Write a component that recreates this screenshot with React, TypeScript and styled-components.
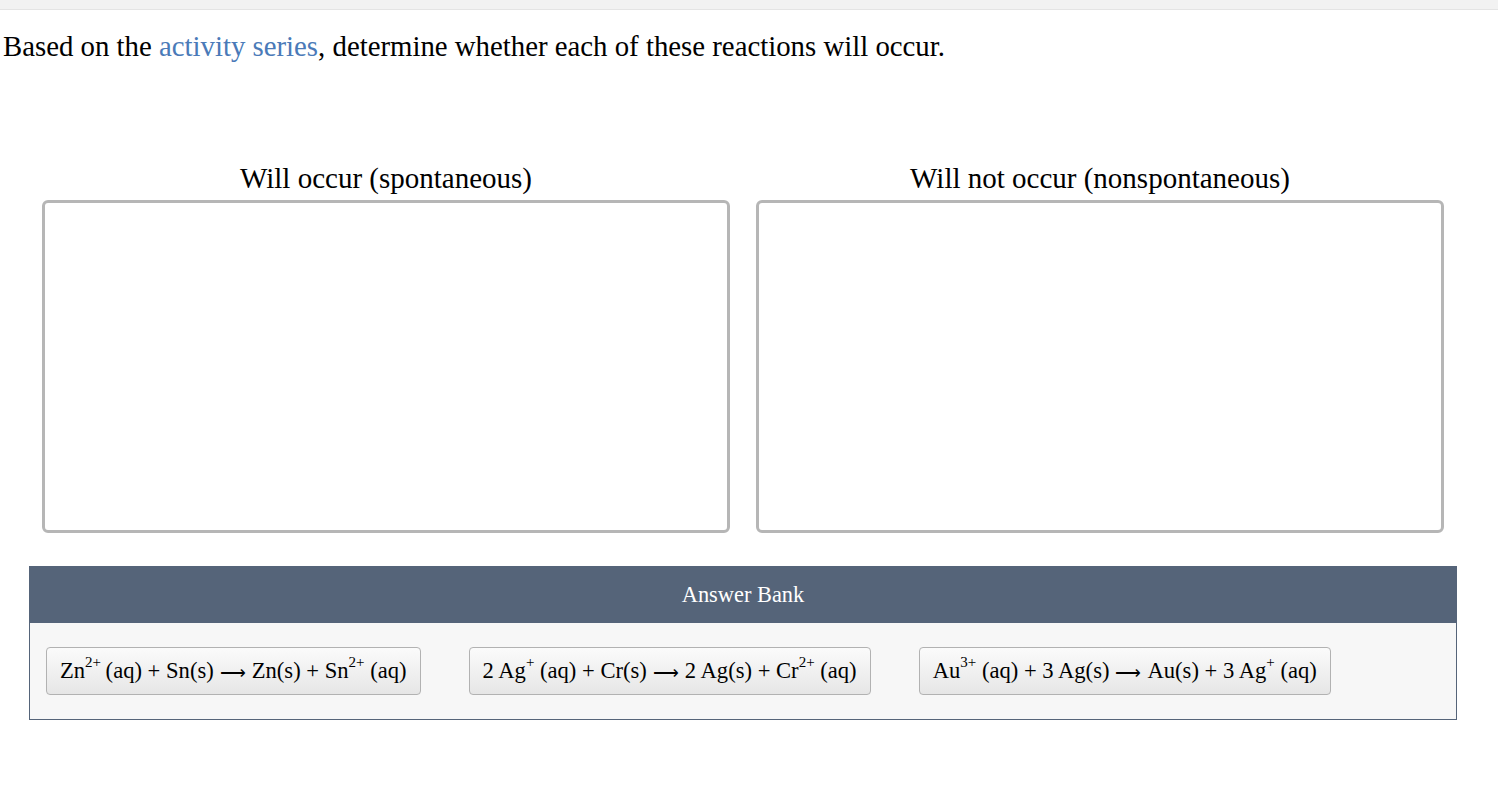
import styled, { createGlobalStyle } from 'styled-components';

const GlobalStyle = createGlobalStyle`
    body {
        margin: 0;
        background: #ffffff;
        font-family: 'Liberation Serif', 'Times New Roman', serif;
        color: #000000;
    }
`;

const TopStrip = styled.div`
    height: 9px;
    background: #f2f2f2;
    border-bottom: 1px solid #e4e4e4;
`;

const Prompt = styled.p`
    margin: 18px 0 0 3px;
    font-size: 28.8px;
    line-height: 36px;
`;

const Link = styled.a`
    color: #4a7ab8;
    text-decoration: none;
`;

const Columns = styled.div`
    display: grid;
    grid-template-columns: 688px 688px;
    column-gap: 26px;
    margin: 97px 0 0 42px;
`;

const Column = styled.div`
    display: flex;
    flex-direction: column;
    align-items: center;
`;

const ColumnTitle = styled.div`
    font-size: 29px;
    line-height: 34px;
    margin-bottom: 5px;
`;

const DropZone = styled.div`
    box-sizing: border-box;
    width: 100%;
    height: 333px;
    border: 3px solid #b6b6b6;
    border-radius: 6px;
    background: #ffffff;
`;

const Bank = styled.div`
    width: 1428px;
    margin: 33px 0 0 29px;
    box-sizing: border-box;
    border: 1px solid #556479;
`;

const BankHeader = styled.div`
    height: 56px;
    background: #556479;
    color: #ffffff;
    font-size: 22.4px;
    display: flex;
    align-items: center;
    justify-content: center;
`;

const BankBody = styled.div`
    background: #f7f7f7;
    display: flex;
    gap: 48px;
    padding: 24px 16px 24px;
`;

const Tile = styled.div`
    box-sizing: border-box;
    height: 48px;
    padding: 0 13px;
    display: flex;
    align-items: center;
    font-size: 22.6px;
    white-space: pre;
    border: 1px solid #b2b2b2;
    border-radius: 4px;
    background: linear-gradient(#fbfbfb, #e6e6e6);
`;

const Sup = styled.span`
    font-size: 15px;
    line-height: 0;
    position: relative;
    top: -9px;
`;

const Arrow = styled.span`
    font-size: 18px;
    margin: 0 6px;
    position: relative;
    top: 2px;
`;

type Part = string | { sup: string } | 'ARROW';

const Equation = ({ parts }: { parts: Part[] }) => (
    <Tile>
        {parts.map((p, i) =>
            p === 'ARROW' ? (
                <Arrow key={i}>⟶</Arrow>
            ) : typeof p === 'string' ? (
                <span key={i}>{p}</span>
            ) : (
                <Sup key={i}>{p.sup}</Sup>
            )
        )}
    </Tile>
);

const App = () => {
    return (
        <>
            <GlobalStyle />
            <TopStrip />
            <Prompt>
                Based on the <Link href="#">activity series</Link>, determine whether each of these reactions will
                occur.
            </Prompt>
            <Columns>
                <Column>
                    <ColumnTitle>Will occur (spontaneous)</ColumnTitle>
                    <DropZone />
                </Column>
                <Column>
                    <ColumnTitle>Will not occur (nonspontaneous)</ColumnTitle>
                    <DropZone />
                </Column>
            </Columns>
            <Bank>
                <BankHeader>Answer Bank</BankHeader>
                <BankBody>
                    <Equation parts={['Zn', { sup: '2+' }, '\u2009(aq) + Sn(s)', 'ARROW', 'Zn(s) + Sn', { sup: '2+' }, ' (aq)']} />
                    <Equation parts={['2 Ag', { sup: '+' }, ' (aq) + Cr(s)', 'ARROW', '2 Ag(s) + Cr', { sup: '2+' }, ' (aq)']} />
                    <Equation parts={['Au', { sup: '3+' }, ' (aq) + 3 Ag(s)', 'ARROW', 'Au(s) + 3 Ag', { sup: '+' }, ' (aq)']} />
                </BankBody>
            </Bank>
        </>
    );
};

export default App;
